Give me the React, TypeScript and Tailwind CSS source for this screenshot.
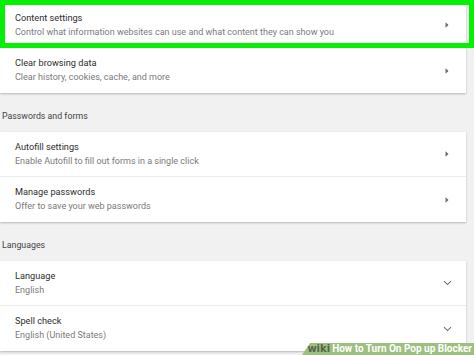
import * as React from "react";

type Row = { title: string; sub: string; kind: "arrow" | "chevron" };

const privacyRows: Row[] = [
  { title: "Content settings", sub: "Control what information websites can use and what content they can show you", kind: "arrow" },
  { title: "Clear browsing data", sub: "Clear history, cookies, cache, and more", kind: "arrow" },
];

const passwordRows: Row[] = [
  { title: "Autofill settings", sub: "Enable Autofill to fill out forms in a single click", kind: "arrow" },
  { title: "Manage passwords", sub: "Offer to save your web passwords", kind: "arrow" },
];

const languageRows: Row[] = [
  { title: "Language", sub: "English", kind: "chevron" },
  { title: "Spell check", sub: "English (United States)", kind: "chevron" },
];

function ArrowRight() {
  return (
    <svg width="6" height="8" viewBox="0 0 6 8" className="text-[#6b6b6b]">
      <path d="M1.5 1.2 L4.5 4 L1.5 6.8 Z" fill="currentColor" />
    </svg>
  );
}

function ChevronDown() {
  return (
    <svg width="9" height="6" viewBox="0 0 9 6" className="text-[#707070]">
      <path d="M1 1.2 L4.5 4.6 L8 1.2" fill="none" stroke="currentColor" strokeWidth="1.1" />
    </svg>
  );
}

function SettingsRow({ row, last }: { row: Row; last: boolean }) {
  return (
    <div
      className={`flex h-[45px] items-center justify-between pl-[15px] pr-[14px] ${
        last ? "" : "border-b border-[#ececec]"
      }`}
    >
      <div className="flex flex-col gap-[2px]">
        <div className="text-[9.2px] leading-[12px] text-[#2e2e2e]">{row.title}</div>
        <div className="text-[9px] leading-[13px] text-[#7a7a7a]">{row.sub}</div>
      </div>
      <div className="flex w-[10px] justify-center">
        {row.kind === "arrow" ? <ArrowRight /> : <ChevronDown />}
      </div>
    </div>
  );
}

function Card({ rows, className = "" }: { rows: Row[]; className?: string }) {
  return (
    <div className={`w-[466px] bg-white shadow-[0_1px_2px_rgba(0,0,0,0.25)] ${className}`}>
      {rows.map((row, i) => (
        <SettingsRow key={row.title} row={row} last={i === rows.length - 1} />
      ))}
    </div>
  );
}

function SectionHeader({ children }: { children: React.ReactNode }) {
  return (
    <div className="flex h-[39px] items-end px-[2px] pb-[10px] text-[8.8px] leading-[12px] text-[#444]">
      {children}
    </div>
  );
}

export default function App() {
  return (
    <div
      className="relative h-[355px] w-[474px] overflow-hidden bg-[#f1f1f1]"
      style={{ fontFamily: "Roboto, 'Liberation Sans', sans-serif" }}
    >
      <Card rows={privacyRows} className="mt-[3px]" />

      <SectionHeader>Passwords and forms</SectionHeader>
      <Card rows={passwordRows} />

      <SectionHeader>Languages</SectionHeader>
      <Card rows={languageRows} />

      {/* highlight box over the first row */}
      <div className="pointer-events-none absolute left-0 top-0 h-[48px] w-[474px] border-[5px] border-[#06f006]" />

      {/* watermark */}
      <div className="absolute bottom-0 right-0 flex h-[12px] w-[172px] items-center justify-end pr-[2px] [clip-path:polygon(8px_0,100%_0,100%_100%,0_100%)] bg-[#9dbf80]">
        <span
          className="text-[10px] font-bold leading-[12px] text-[#55664a]"
          style={{ fontFamily: "'DejaVu Sans', sans-serif" }}
        >
          wiki
        </span>
        <span className="ml-[2px] text-[10px] font-bold leading-[12px] text-white">
          How to Turn On Pop up Blocker
        </span>
      </div>
    </div>
  );
}
